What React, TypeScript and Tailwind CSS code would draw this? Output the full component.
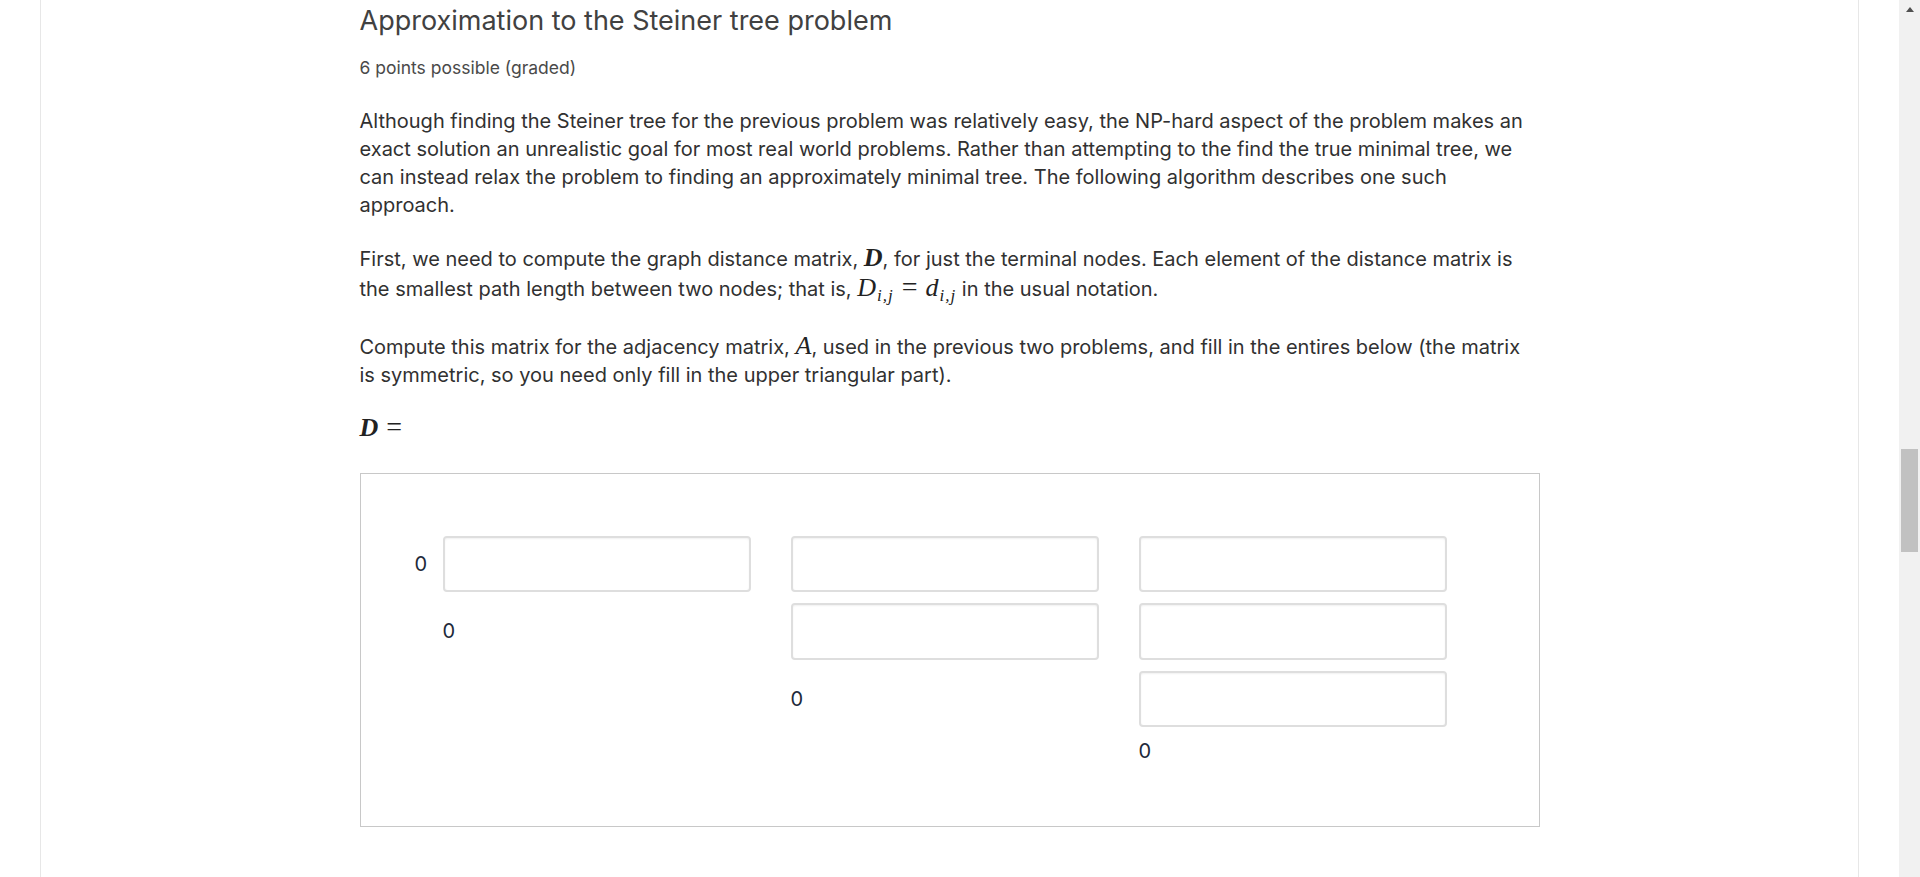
import React from 'react';

function Mi({ children, bold = false }: { children: React.ReactNode; bold?: boolean }) {
  return (
    <span
      className={
        "font-['Liberation_Serif',serif] italic text-[26px] leading-none text-[#222] " +
        (bold ? 'font-bold' : 'font-normal')
      }
    >
      {children}
    </span>
  );
}

function Sub({ children }: { children: React.ReactNode }) {
  return <span className="text-[17px] align-[-5px] leading-none ml-[1px] tracking-[1px]">{children}</span>;
}

function Eq({ className = '' }: { className?: string }) {
  return (
    <span className={"font-['Liberation_Serif',serif] text-[28px] leading-none text-[#222] " + className}>=</span>
  );
}

function Cell({ value }: { value?: string }) {
  if (value !== undefined) {
    return <div className="flex items-center text-[20px] text-[#1e2a3a]">{value}</div>;
  }
  return (
    <div className="flex items-center">
      <input
        type="text"
        className="w-[308px] h-[56.5px] border-2 border-[#dedede] rounded-[4px] bg-white shadow-[inset_0_1px_2px_rgba(0,0,0,0.06)] outline-none"
      />
    </div>
  );
}

export default function App() {
  // upper triangle of the matrix: '0' on the diagonal, inputs above it
  const rows: (string | null | undefined)[][] = [
    ['0', undefined, undefined, undefined],
    [null, '0', undefined, undefined],
    [null, null, '0', undefined],
    [null, null, null, '0'],
  ];

  return (
    <div className="flex h-[877px] overflow-hidden bg-white font-['Inter',sans-serif]">
      <div className="flex-1 px-[40px]">
        <div className="h-full border-x border-[#e7e7e7]">
          <div className="w-[1180px] mx-auto pt-[5px]">
            <h2 className="text-[27px] leading-[32px] font-normal text-[#414141]">
              Approximation to the Steiner tree problem
            </h2>
            <div className="mt-[19px] text-[17.5px] leading-[24px] text-[#4a4a4a]">
              6 points possible (graded)
            </div>

            <div className="mt-[27px] text-[20px] leading-[28px] text-[#313131]">
              <p>
                Although finding the Steiner tree for the previous problem was relatively easy, the NP-hard aspect of
                the problem makes an exact solution an unrealistic goal for most real world problems. Rather than
                attempting to the find the true minimal tree, we can instead relax the problem to finding an
                approximately minimal tree. The following algorithm describes one such approach.
              </p>
              <p className="mt-[26px]">
                First, we need to compute the graph distance matrix, <Mi bold>D</Mi>, for just the terminal nodes. Each
                element of the distance matrix is the smallest path length between two nodes; that is,{' '}
                <Mi>
                  D<Sub>i,j</Sub>
                </Mi>
                <Eq className="mx-[8px]" />
                <Mi>
                  d<Sub>i,j</Sub>
                </Mi>{' '}
                in the usual notation.
              </p>
              <p className="mt-[29px]">
                Compute this matrix for the adjacency matrix, <Mi>A</Mi>, used in the previous two problems, and fill
                in the entires below (the matrix is symmetric, so you need only fill in the upper triangular part).
              </p>
              <p className="mt-[24px]">
                <Mi bold>D</Mi>
                <Eq className="ml-[8px]" />
              </p>
            </div>

            <div className="mt-[29.5px] border border-[#c8c8c8] pt-[62px] pb-[62px] pl-[54px]">
              <div className="grid grid-cols-[28px_348px_348px_308px] grid-rows-[56.5px_56.5px_56.5px_26px] gap-y-[11px]">
                {rows.map((row, r) =>
                  row.map((v, c) =>
                    v === null ? <div key={`${r}-${c}`} /> : <Cell key={`${r}-${c}`} value={v} />
                  )
                )}
              </div>
            </div>
          </div>
        </div>
      </div>

      {/* scrollbar */}
      <div className="w-[21px] bg-[#f1f1f1] flex flex-col items-center">
        <svg width="10" height="8" viewBox="0 0 10 8" className="mt-[6px]">
          <path d="M5 1 L9 6 L1 6 Z" fill="#505050" />
        </svg>
        <div className="mt-[435px] w-[17px] h-[103px] bg-[#c1c1c1]" />
      </div>
    </div>
  );
}
